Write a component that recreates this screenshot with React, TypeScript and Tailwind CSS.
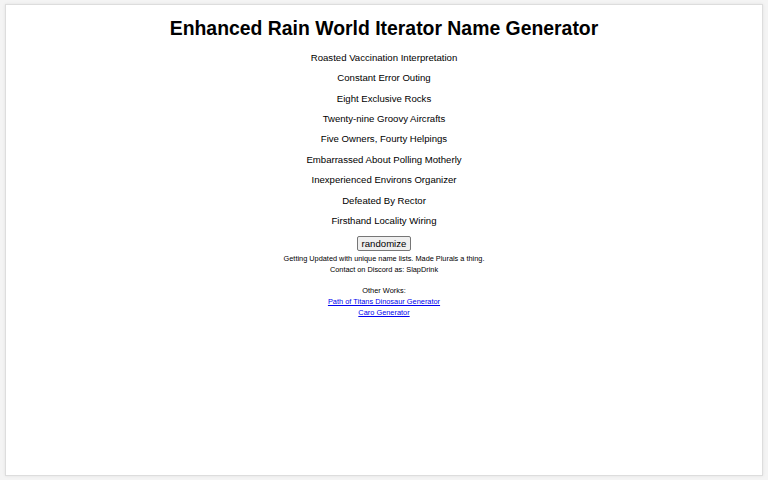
import React from "react";

const names = [
  "Roasted Vaccination Interpretation",
  "Constant Error Outing",
  "Eight Exclusive Rocks",
  "Twenty-nine Groovy Aircrafts",
  "Five Owners, Fourty Helpings",
  "Embarrassed About Polling Motherly",
  "Inexperienced Environs Organizer",
  "Defeated By Rector",
  "Firsthand Locality Wiring",
];

export default function App() {
  return (
    <div
      className="w-[768px] h-[480px] bg-[#f4f4f4] p-[4px_5px_4px_5px] text-black"
      style={{ fontFamily: '"Liberation Sans", Arial, sans-serif' }}
    >
      <div className="h-full bg-white border border-[#dddddd] shadow-[0_0_3px_rgba(0,0,0,0.08)] flex flex-col items-center pt-[12px]">
        <h1 className="text-[19.4px] leading-[22px] font-bold">
          Enhanced Rain World Iterator Name Generator
        </h1>
        <div className="mt-[8.8px] flex flex-col items-center">
          {names.map((n) => (
            <div key={n} className="text-[9.6px] leading-[20.4px]">
              {n}
            </div>
          ))}
        </div>
        <button className="mt-[4.3px] h-[15px] px-[4px] text-[9.6px] leading-[13px] bg-[#efefef] border border-[#767676] rounded-[2px] text-black">
          randomize
        </button>
        <div className="mt-[2px] text-[7.35px] leading-[11px] text-center">
          <div>Getting Updated with unique name lists. Made Plurals a thing.</div>
          <div>Contact on Discord as: SlapDrink</div>
        </div>
        <div className="mt-[10px] text-[7.4px] leading-[11px] text-center">
          <div>Other Works:</div>
          <div>
            <a href="#" className="text-[#0000ee] underline">
              Path of Titans Dinosaur Generator
            </a>
          </div>
          <div>
            <a href="#" className="text-[#0000ee] underline">
              Caro Generator
            </a>
          </div>
        </div>
      </div>
    </div>
  );
}
